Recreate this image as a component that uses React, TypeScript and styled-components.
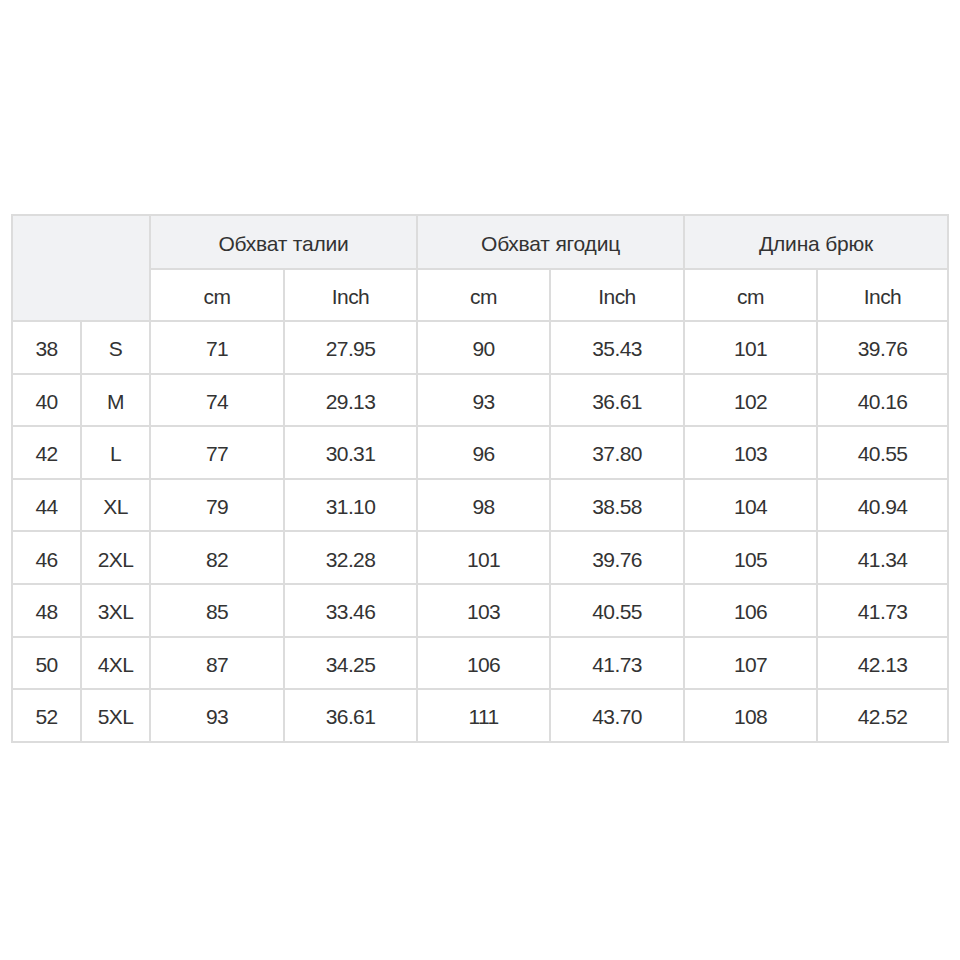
import React from "react";
import styled, { createGlobalStyle } from "styled-components";

const Global = createGlobalStyle`
  html, body { margin: 0; padding: 0; background: #ffffff; }
  body { width: 960px; height: 960px; overflow: hidden; }
`;

const Page = styled.div`
  width: 960px;
  height: 960px;
  padding: 214px 0 0 11px;
  box-sizing: border-box;
  background: #fff;
`;

const Table = styled.table`
  width: 936px;
  border-collapse: collapse;
  table-layout: fixed;
  font-family: "Liberation Sans", Arial, sans-serif;
  font-size: 21px;
  letter-spacing: -0.6px;
  color: #333333;
  border: 2px solid #dcdcdc;
`;

const Row = styled.tr<{ $h: number }>`
  height: ${(p) => p.$h}px;
`;

const Cell = styled.td<{ $head?: boolean }>`
  border: 2px solid #dcdcdc;
  text-align: center;
  vertical-align: middle;
  padding: 4px 0 0 0;
  background: ${(p) => (p.$head ? "#f1f2f4" : "#ffffff")};
`;

const GroupLabel = styled.span`
  letter-spacing: -0.2px;
`;

const widths = [69, 69, 134, 133, 133, 134, 133, 131];

const rows = [
  ["38", "S", "71", "27.95", "90", "35.43", "101", "39.76"],
  ["40", "M", "74", "29.13", "93", "36.61", "102", "40.16"],
  ["42", "L", "77", "30.31", "96", "37.80", "103", "40.55"],
  ["44", "XL", "79", "31.10", "98", "38.58", "104", "40.94"],
  ["46", "2XL", "82", "32.28", "101", "39.76", "105", "41.34"],
  ["48", "3XL", "85", "33.46", "103", "40.55", "106", "41.73"],
  ["50", "4XL", "87", "34.25", "106", "41.73", "107", "42.13"],
  ["52", "5XL", "93", "36.61", "111", "43.70", "108", "42.52"],
];

const groups = ["Обхват талии", "Обхват ягодиц", "Длина брюк"];

export default function App() {
  return (
    <>
      <Global />
      <Page>
        <Table>
          <colgroup>
            {widths.map((w, i) => (
              <col key={i} style={{ width: w }} />
            ))}
          </colgroup>
          <tbody>
            <Row $h={54}>
              <Cell $head colSpan={2} rowSpan={2} />
              {groups.map((g) => (
                <Cell $head colSpan={2} key={g}>
                  <GroupLabel>{g}</GroupLabel>
                </Cell>
              ))}
            </Row>
            <Row $h={52}>
              {groups.map((g) => (
                <React.Fragment key={g}>
                  <Cell>cm</Cell>
                  <Cell>Inch</Cell>
                </React.Fragment>
              ))}
            </Row>
            {rows.map((r) => (
              <Row $h={52.6} key={r[0]}>
                {r.map((v, i) => (
                  <Cell key={i}>{v}</Cell>
                ))}
              </Row>
            ))}
          </tbody>
        </Table>
      </Page>
    </>
  );
}
